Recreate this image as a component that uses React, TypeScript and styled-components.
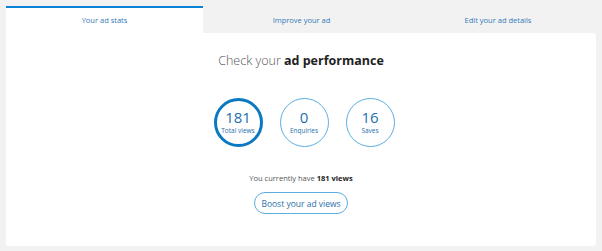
import React, {useState} from 'react';
import styled, {createGlobalStyle} from 'styled-components';

const GlobalStyle = createGlobalStyle`
  html, body {
    margin: 0;
    padding: 0;
    background: #f2f2f2;
    font-family: 'Open Sans', 'Noto Sans', sans-serif;
  }
`;

const Page = styled.div`
  padding: 6px 6px 5px 6px;
  width: 590px;
`;

const Tabs = styled.div`
  display: grid;
  grid-template-columns: 197px 197px 196px;
  height: 27px;
`;

interface TabProps {
  active: boolean;
}

const Tab = styled.div<TabProps>`
  display: flex;
  align-items: center;
  justify-content: center;
  box-sizing: border-box;
  padding-bottom: 1px;
  font-size: 7.5px;
  color: #3479b8;
  background: ${p => (p.active ? '#fff' : 'transparent')};
  border-top: 2px solid ${p => (p.active ? '#0a84d6' : 'transparent')};
  cursor: pointer;
`;

const Panel = styled.div`
  background: #fff;
  height: 213px;
  border-radius: 0 3px 3px 3px;
  display: flex;
  flex-direction: column;
  align-items: center;
`;

const Title = styled.h1`
  margin: 18px 0 0;
  font-size: 12.5px;
  line-height: 20px;
  font-weight: 300;
  color: #555;

  strong {
    font-weight: 700;
    color: #222;
  }
`;

const Stats = styled.div`
  display: flex;
  gap: 17px;
  margin-top: 27px;
  margin-left: 6px;
`;

interface CircleProps {
  primary?: boolean;
}

const Circle = styled.div<CircleProps>`
  width: 49px;
  height: 49px;
  box-sizing: border-box;
  border-radius: 50%;
  border: ${p => (p.primary ? '3px solid #0b78c2' : '1px solid #5aaee0')};
  display: flex;
  flex-direction: column;
  align-items: center;
  justify-content: center;
  color: #236fae;
`;

const Value = styled.div`
  font-size: 15px;
  line-height: 17px;
  font-weight: 400;
  margin-top: -2px;
`;

const Label = styled.div`
  font-size: 6.5px;
  line-height: 9px;
`;

const Summary = styled.p`
  margin: 26px 0 0;
  font-size: 7.5px;
  color: #555;

  strong {
    color: #222;
  }
`;

const BoostButton = styled.button`
  margin-top: 9px;
  width: 94px;
  height: 22px;
  border: 1px solid #5aaee0;
  border-radius: 11px;
  background: #fff;
  color: #2a6fa8;
  font-family: inherit;
  font-size: 8.5px;
  padding: 0;
  cursor: pointer;
`;

const tabs = ['Your ad stats', 'Improve your ad', 'Edit your ad details'];

const stats = [
  {value: 181, label: 'Total views', primary: true},
  {value: 0, label: 'Enquiries'},
  {value: 16, label: 'Saves'},
];

const App: React.FC = () => {
  const [active, setActive] = useState(0);
  return (
    <Page>
      <GlobalStyle />
      <Tabs>
        {tabs.map((t, i) => (
          <Tab key={t} active={i === active} onClick={() => setActive(i)}>
            {t}
          </Tab>
        ))}
      </Tabs>
      <Panel>
        <Title>
          Check your <strong>ad performance</strong>
        </Title>
        <Stats>
          {stats.map(s => (
            <Circle key={s.label} primary={s.primary}>
              <Value>{s.value}</Value>
              <Label>{s.label}</Label>
            </Circle>
          ))}
        </Stats>
        <Summary>
          You currently have <strong>181 views</strong>
        </Summary>
        <BoostButton type="button">Boost your ad views</BoostButton>
      </Panel>
    </Page>
  );
};

export default App;
